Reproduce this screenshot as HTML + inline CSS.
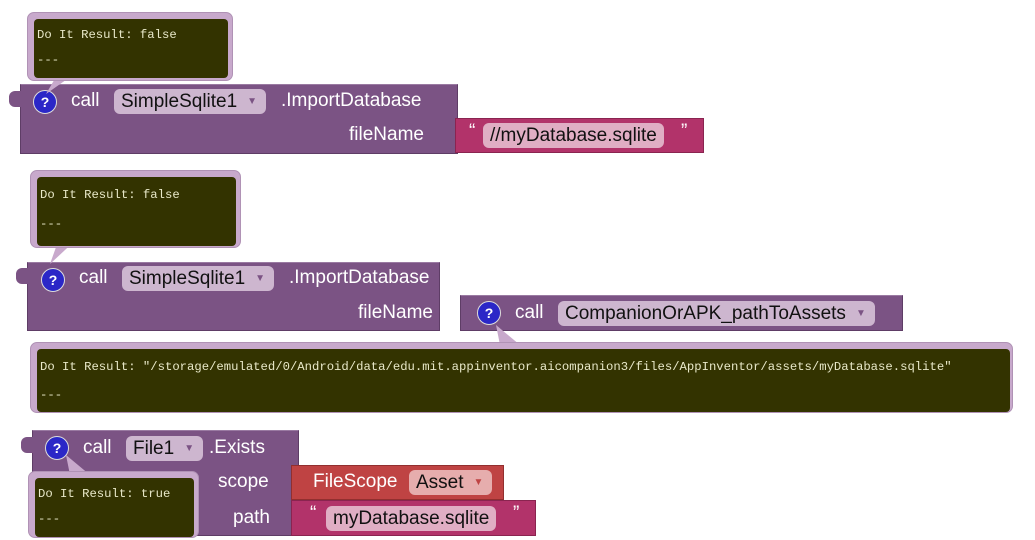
<!DOCTYPE html>
<html><head><style>
body{margin:0;width:1035px;height:540px;background:#fff;position:relative;overflow:hidden;font-family:"Liberation Sans",sans-serif}
.a{position:absolute;box-sizing:border-box}
.p{background:#7b5384;border:1px solid #5e3d66;border-top-color:#9a7aa2}
.s{background:#b2336a;border:1px solid #8a2450}
.r{background:#bf4343;border:1px solid #922f2f}
.t{color:#fff;font-size:19px;position:absolute;white-space:nowrap;margin-top:1px}
.dd{position:absolute;background:#cdb6cf;border-radius:6px;color:#111;font-size:19px;padding:0 7px;height:25px;line-height:25px;white-space:nowrap}
.dd i{font-style:normal;font-size:10px;color:#7b5384;margin-left:10px;margin-right:2px;vertical-align:3px}
.q{position:absolute;width:22px;height:22px;border-radius:50%;background:#2b27c7;border:1px solid #ddd;color:#fff;font-weight:bold;font-size:14px;text-align:center;line-height:22px}
.bub{position:absolute;background:#c8a9cc;border-radius:7px;border:1px solid #b092b5}
.in{position:absolute;background:#333300;border-radius:4px;color:#e8e8c8;font-family:"Liberation Mono",monospace;font-size:12.25px;line-height:25px;padding:4px 3px;white-space:pre}
.tab{position:absolute;width:12px;height:16px;background:#7b5384;border-radius:6px 0 0 6px}
.qm{color:#fff;position:absolute;font-size:19px}
</style></head><body>

<!-- Block 1 -->
<div class="a p" style="left:20px;top:84px;width:438px;height:70px"></div>
<div class="tab" style="left:9px;top:91px"></div>
<div class="q" style="left:33px;top:90px">?</div>
<div class="t" style="left:71px;top:89px">call</div>
<div class="dd" style="left:114px;top:89px">SimpleSqlite1<i>▼</i></div>
<div class="t" style="left:281px;top:89px">.ImportDatabase</div>
<div class="t" style="left:349px;top:123px">fileName</div>
<div class="a s" style="left:455px;top:118px;width:249px;height:35px"></div>
<div class="qm" style="left:469px;top:121px">“</div>
<div class="dd" style="left:483px;top:123px;background:#e0aec4">//myDatabase.sqlite</div>
<div class="qm" style="left:681px;top:121px">”</div>
<svg class="a" style="left:40px;top:70px" width="60" height="30"><polygon points="20,0 40,0 6,24" fill="#c8a9cc"/></svg>
<div class="bub" style="left:27px;top:12px;width:204px;height:67px"></div>
<div class="in" style="left:34px;top:19px;width:188px;height:51px">Do It Result: false
---</div>

<!-- Block 2 -->
<div class="a p" style="left:27px;top:262px;width:413px;height:69px"></div>
<div class="tab" style="left:16px;top:268px"></div>
<div class="q" style="left:41px;top:268px">?</div>
<div class="t" style="left:79px;top:266px">call</div>
<div class="dd" style="left:122px;top:266px">SimpleSqlite1<i>▼</i></div>
<div class="t" style="left:289px;top:266px">.ImportDatabase</div>
<div class="t" style="left:358px;top:301px">fileName</div>
<div class="a p" style="left:460px;top:295px;width:443px;height:36px"></div>
<div class="q" style="left:477px;top:301px">?</div>
<div class="t" style="left:515px;top:301px">call</div>
<div class="dd" style="left:558px;top:301px">CompanionOrAPK_pathToAssets<i>▼</i></div>
<svg class="a" style="left:40px;top:236px" width="60" height="30"><polygon points="20,0 40,0 10,28" fill="#c8a9cc"/></svg>
<div class="bub" style="left:30px;top:170px;width:209px;height:76px"></div>
<div class="in" style="left:37px;top:177px;width:193px;height:61px;line-height:29px">Do It Result: false
---</div>
<svg class="a" style="left:490px;top:325px" width="60" height="22"><polygon points="6,0 10,20 30,20" fill="#c8a9cc"/></svg>
<div class="bub" style="left:30px;top:342px;width:981px;height:69px"></div>
<div class="in" style="left:37px;top:349px;width:967px;height:55px;line-height:28px">Do It Result: "/storage/emulated/0/Android/data/edu.mit.appinventor.aicompanion3/files/AppInventor/assets/myDatabase.sqlite"
---</div>

<!-- Block 3 -->
<div class="a p" style="left:32px;top:430px;width:267px;height:106px"></div>
<div class="tab" style="left:21px;top:437px"></div>
<div class="q" style="left:45px;top:436px">?</div>
<div class="t" style="left:83px;top:436px">call</div>
<div class="dd" style="left:126px;top:436px">File1<i>▼</i></div>
<div class="t" style="left:209px;top:436px">.Exists</div>
<div class="t" style="left:218px;top:470px">scope</div>
<div class="t" style="left:233px;top:506px">path</div>
<div class="a r" style="left:291px;top:465px;width:213px;height:35px"></div>
<div class="t" style="left:313px;top:470px">FileScope</div>
<div class="dd" style="left:409px;top:470px;background:#e6adad">Asset<i style="color:#bf4343">▼</i></div>
<div class="a s" style="left:291px;top:500px;width:245px;height:36px"></div>
<div class="qm" style="left:310px;top:503px">“</div>
<div class="dd" style="left:326px;top:506px;background:#e0aec4">myDatabase.sqlite</div>
<div class="qm" style="left:513px;top:503px">”</div>
<svg class="a" style="left:60px;top:455px" width="40" height="22"><polygon points="6,0 10,20 30,20" fill="#c8a9cc"/></svg>
<div class="bub" style="left:28px;top:471px;width:169px;height:65px"></div>
<div class="in" style="left:35px;top:478px;width:153px;height:51px">Do It Result: true
---</div>
</body></html>
